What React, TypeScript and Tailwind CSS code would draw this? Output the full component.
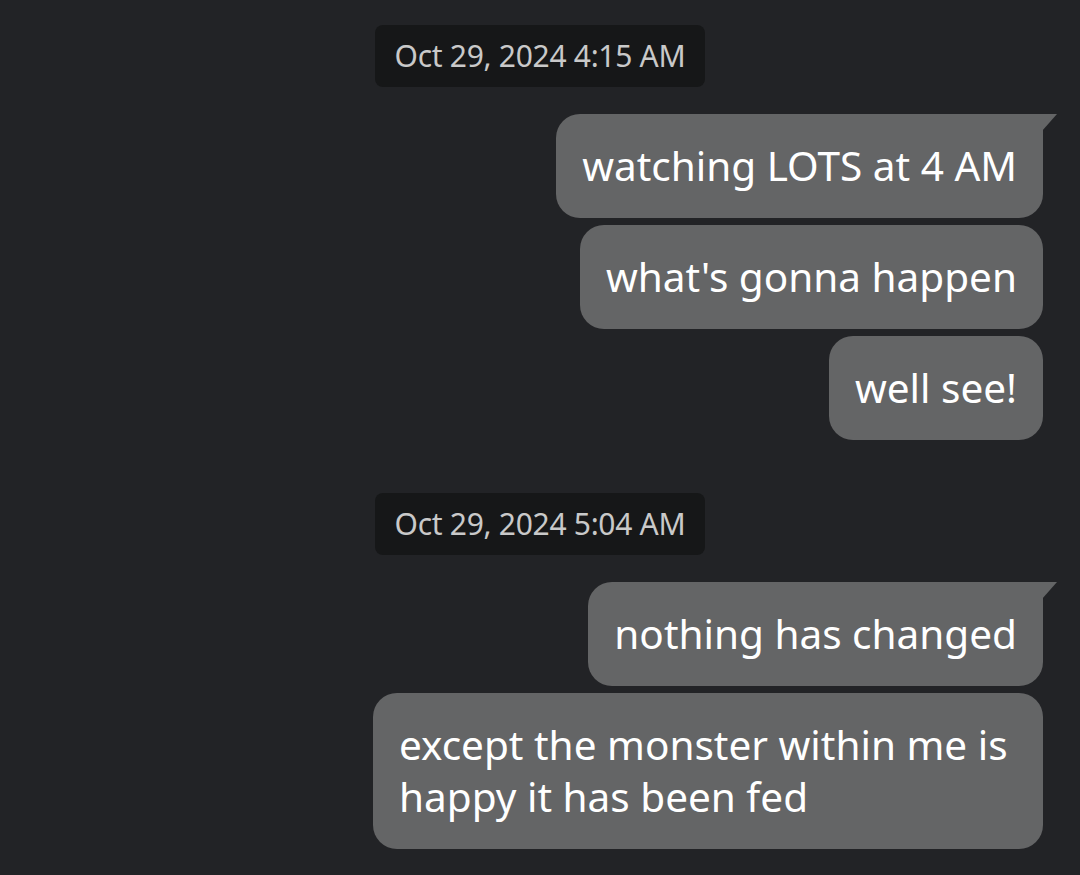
const thread = [
  {
    time: 'Oct 29, 2024 4:15 AM',
    messages: ['watching LOTS at 4 AM', "what's gonna happen", 'well see!'],
  },
  {
    time: 'Oct 29, 2024 5:04 AM',
    messages: [
      'nothing has changed',
      'except the monster within me is happy it has been fed',
    ],
  },
];

function Bubble({ text, first }: { text: string; first: boolean }) {
  return (
    <div
      className={`relative max-w-[670px] bg-[#646566] text-white text-[40.5px] leading-[52px] px-[26px] py-[26px] rounded-[24px] ${
        first ? 'rounded-tr-none' : ''
      }`}
    >
      {first && (
        <svg
          className="absolute -right-[14px] top-0"
          width="15"
          height="17"
          viewBox="0 0 15 17"
        >
          <path d="M0 0 H15 L0 17 Z" fill="#646566" />
        </svg>
      )}
      {text}
    </div>
  );
}

export default function App() {
  return (
    <div
      className="w-[1080px] h-[875px] bg-[#222326] pt-[25px] pr-[37px] overflow-hidden"
      style={{ fontFamily: '"Noto Sans", sans-serif' }}
    >
      {thread.map((group, i) => (
        <div key={i} className={i > 0 ? 'mt-[53px]' : ''}>
          <div className="flex justify-center pl-[37px]">
            <div className="bg-[#161718] text-[#c9c9c9] text-[30px] leading-[62px] tracking-[-0.3px] px-[20px] rounded-[8px]">
              {group.time}
            </div>
          </div>
          <div className="mt-[27px] flex flex-col items-end gap-[7px]">
            {group.messages.map((m, j) => (
              <Bubble key={j} text={m} first={j === 0} />
            ))}
          </div>
        </div>
      ))}
    </div>
  );
}
